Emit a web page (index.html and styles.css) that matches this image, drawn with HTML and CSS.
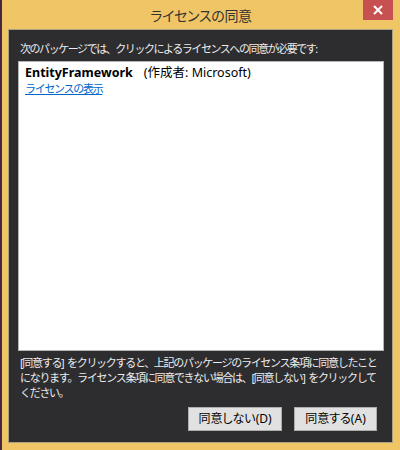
FILE: index.html
```html
<!DOCTYPE html>
<html lang="ja">
<head>
<meta charset="utf-8">
<link rel="stylesheet" href="styles.css">
</head>
<body>
<div class="window">
  <div class="titlebar">
    <div></div>
    <div class="title">ライセンスの同意</div>
    <div class="tb-right"><div class="close"><svg width="10" height="10" viewBox="0 0 10 10"><path d="M1 1 L9 9 M9 1 L1 9" stroke="#fff" stroke-width="2" fill="none"/></svg></div></div>
  </div>
  <div class="client">
    <div class="label">次のパッケージでは、クリックによるライセンスへの同意が必要です:</div>
    <div class="listbox">
      <div class="pkg"><span class="pkg-name">EntityFramework</span><span class="pkg-author">(作成者: Microsoft)</span></div>
      <a class="pkg-link" href="#">ライセンスの表示</a>
    </div>
    <div class="note">[同意する] をクリックすると、上記のパッケージのライセンス条項に同意したこと<br>になります。ライセンス条項に同意できない場合は、[同意しない] をクリックして<br>ください。</div>
    <div class="buttons">
      <button class="btn btn-decline">同意しない(D)</button>
      <button class="btn btn-accept">同意する(A)</button>
    </div>
  </div>
</div>
</body>
</html>
```
FILE: styles.css
```css
html, body {
  margin: 0;
  padding: 0;
}
body {
  width: 400px;
  height: 450px;
  background: #4a2645;
  overflow: hidden;
  font-family: "Noto Sans", "Noto Sans CJK JP", sans-serif;
}
.window {
  margin-left: 2px;
  width: 398px;
  height: 450px;
  background: #f0c566;
  display: flex;
  flex-direction: column;
}
.titlebar {
  height: 29px;
  display: grid;
  grid-template-columns: 1fr auto 1fr;
  align-items: start;
}
.title {
  font-family: "Noto Sans CJK JP", sans-serif;
  font-feature-settings: "palt";
  font-size: 14px;
  letter-spacing: -0.3px;
  color: #333;
  line-height: 30px;
}
.tb-right {
  display: flex;
  justify-content: flex-end;
  padding-right: 7px;
}
.close {
  width: 30px;
  height: 20px;
  background: #c75050;
  display: flex;
  align-items: center;
  justify-content: center;
}
.close svg { display: block; }
.client {
  margin: 0 7px 0 6px;
  height: 412px;
  border: 1px solid #a89f84;
  background: #2d2d30;
  display: flex;
  flex-direction: column;
}
.label {
  padding: 11px 0 0 11px;
  font-size: 11px;
  letter-spacing: -1.45px;
  line-height: 16px;
  color: #ececec;
  white-space: nowrap;
}
.listbox {
  margin: 4px 8px 0 9px;
  height: 282px;
  background: #fff;
  border: 1px solid #b4b4b4;
  padding: 3px 6px;
  line-height: 16px;
}
.pkg {
  font-size: 12.5px;
  line-height: 16px;
  color: #000;
  white-space: nowrap;
}
.pkg-name {
  font-weight: bold;
}
.pkg-author {
  margin-left: 11px;
}
.pkg-link {
  display: block;
  width: fit-content;
  font-size: 11px;
  letter-spacing: -1.3px;
  line-height: 16px;
  color: #0066cc;
  text-decoration: underline;
}
.note {
  margin: 4px 0 0 11px;
  font-size: 11px;
  letter-spacing: -1.3px;
  word-spacing: 2px;
  line-height: 15px;
  color: #ececec;
  white-space: nowrap;
}
.buttons {
  margin: 7px 15px 0 0;
  display: flex;
  justify-content: flex-end;
  gap: 12px;
}
.btn {
  height: 24px;
  margin: 0;
  padding: 0;
  background: #e1e1e1;
  border: 1px solid #adadad;
  font-family: "Noto Sans", "Noto Sans CJK JP", sans-serif;
  font-feature-settings: "palt";
  font-size: 12px;
  color: #000;
  line-height: 20px;
}
.btn-decline { width: 94px; }
.btn-accept { width: 83px; }
```
